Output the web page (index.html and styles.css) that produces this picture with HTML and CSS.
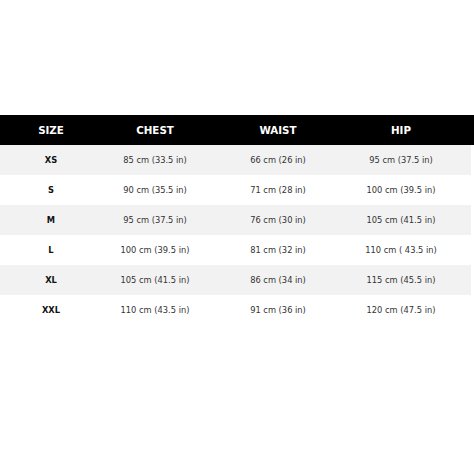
FILE: index.html
```html
<!DOCTYPE html>
<html>
<head>
<meta charset="utf-8">
<link rel="stylesheet" href="styles.css">
</head>
<body>
<div class="page">
  <div class="chart">
    <div class="row head">
      <div class="cell">SIZE</div>
      <div class="cell">CHEST</div>
      <div class="cell">WAIST</div>
      <div class="cell">HIP</div>
    </div>
    <div class="row alt">
      <div class="cell size">XS</div>
      <div class="cell">85 cm (33.5 in)</div>
      <div class="cell">66 cm (26 in)</div>
      <div class="cell">95 cm (37.5 in)</div>
    </div>
    <div class="row">
      <div class="cell size">S</div>
      <div class="cell">90 cm (35.5 in)</div>
      <div class="cell">71 cm (28 in)</div>
      <div class="cell">100 cm (39.5 in)</div>
    </div>
    <div class="row alt">
      <div class="cell size">M</div>
      <div class="cell">95 cm (37.5 in)</div>
      <div class="cell">76 cm (30 in)</div>
      <div class="cell">105 cm (41.5 in)</div>
    </div>
    <div class="row">
      <div class="cell size">L</div>
      <div class="cell">100 cm (39.5 in)</div>
      <div class="cell">81 cm (32 in)</div>
      <div class="cell">110 cm ( 43.5 in)</div>
    </div>
    <div class="row alt">
      <div class="cell size">XL</div>
      <div class="cell">105 cm (41.5 in)</div>
      <div class="cell">86 cm (34 in)</div>
      <div class="cell">115 cm (45.5 in)</div>
    </div>
    <div class="row">
      <div class="cell size">XXL</div>
      <div class="cell">110 cm (43.5 in)</div>
      <div class="cell">91 cm (36 in)</div>
      <div class="cell">120 cm (47.5 in)</div>
    </div>
  </div>
</div>
</body>
</html>
```
FILE: styles.css
```css
html, body {
  margin: 0;
  padding: 0;
  background: #ffffff;
}
.page {
  width: 474px;
  height: 474px;
  padding-top: 115px;
  box-sizing: border-box;
  font-family: "DejaVu Sans", "Open Sans", sans-serif;
}
.chart {
  display: flex;
  flex-direction: column;
}
.row {
  display: grid;
  grid-template-columns: 102px 106px 140px 106px 1fr;
  height: 30px;
  align-items: center;
  font-size: 8.3px;
  color: #333333;
}
.row.head {
  background: #000000;
  color: #ffffff;
  font-weight: bold;
  font-size: 10.3px;
  height: 30px;
}
.row.alt {
  background: #f2f2f2;
  margin-right: 3px;
}
.cell {
  text-align: center;
  white-space: nowrap;
}
.size {
  font-weight: bold;
  color: #111111;
}
```
